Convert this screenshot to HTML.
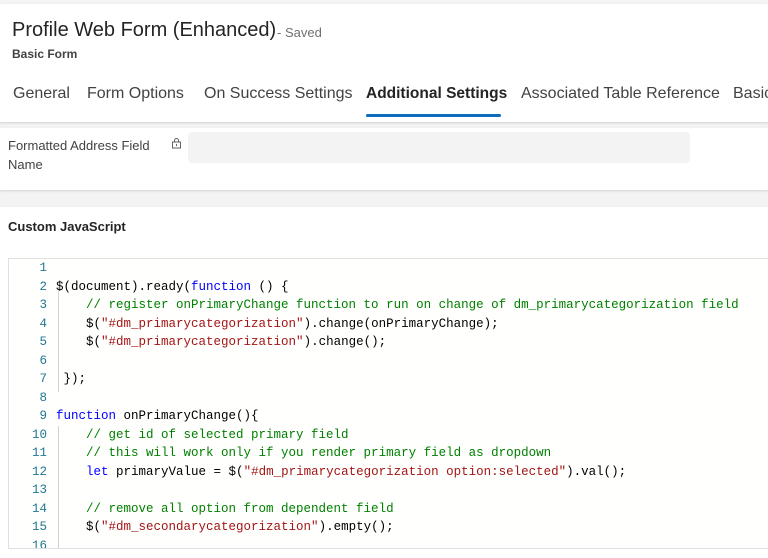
<!DOCTYPE html>
<html><head><style>
body{margin:0;width:768px;height:558px;background:#f3f3f3;font-family:"Liberation Sans",sans-serif;position:relative;overflow:hidden;color:#242424}
.a{position:absolute;white-space:nowrap}
.card{position:absolute;background:#fff;left:0;width:768px;box-shadow:0 1px 2px rgba(0,0,0,.14)}
.tab{position:absolute;top:85px;font-size:16px;color:#424242}
.code{position:absolute;left:8px;top:258px;width:762px;height:289px;background:#fffffe;border:1px solid #e0e0e0;font-family:"Liberation Mono",monospace;font-size:12.5px;overflow:hidden}
.ln{position:absolute;left:0;width:38px;text-align:right;color:#237893}
.cl{position:absolute;left:47px;color:#000;white-space:pre}
.c{color:#008000}.s{color:#a31515}.k{color:#0000ff}
.guide{position:absolute;left:49px;width:1px;background:#d3d3d3}
</style></head><body>
<div class="card" style="top:4px;height:118px"></div>
<div class="a" style="left:12px;top:19px;font-size:20px;color:#242424">Profile Web Form (Enhanced)</div>
<div class="a" style="left:277px;top:25px;font-size:13px;color:#707070">- Saved</div>
<div class="a" style="left:12px;top:47px;font-size:12px;font-weight:bold;color:#424242">Basic Form</div>
<div class="tab" style="left:13px">General</div>
<div class="tab" style="left:87px">Form Options</div>
<div class="tab" style="left:204px">On Success Settings</div>
<div class="tab" style="left:366px;font-weight:bold;color:#242424;font-size:15.5px">Additional Settings</div>
<div class="tab" style="left:521px">Associated Table Reference</div>
<div class="tab" style="left:733px">Basic</div>
<div class="a" style="left:366px;top:114px;width:135px;height:3px;background:#0f6cbd;border-radius:2px"></div>
<div class="card" style="top:128px;height:62px"></div>
<div class="a" style="left:8px;top:136px;font-size:13px;color:#424242;line-height:19px;white-space:normal;width:160px">Formatted Address Field<br>Name</div>
<svg class="a" style="left:171px;top:137px" width="11" height="12" viewBox="0 0 11 12"><rect x="1.5" y="5" width="8" height="6" fill="none" stroke="#616161"/><path d="M3.5 5V3.5a2 2 0 0 1 4 0V5" fill="none" stroke="#616161"/><rect x="5" y="7" width="1" height="2" fill="#616161"/></svg>
<div class="a" style="left:188px;top:132px;width:502px;height:31px;background:#f3f3f3;border-radius:4px"></div>
<div class="card" style="top:207px;height:351px"></div>
<div class="a" style="left:8px;top:219px;font-size:13px;font-weight:bold;color:#242424">Custom JavaScript</div>
<div class="code">
<div class="guide" style="top:28px;height:105px"></div>
<div class="guide" style="top:167px;height:130px"></div>
<div class="ln" style="top:2px">1</div>
<div class="ln" style="top:20.5px">2</div><div class="cl" style="top:20.5px">$(document).ready(<span class="k">function</span> () {</div>
<div class="ln" style="top:39px">3</div><div class="cl" style="top:39px">    <span class="c">// register onPrimaryChange function to run on change of dm_primarycategorization field</span></div>
<div class="ln" style="top:57.5px">4</div><div class="cl" style="top:57.5px">    $(<span class="s">"#dm_primarycategorization"</span>).change(onPrimaryChange);</div>
<div class="ln" style="top:76px">5</div><div class="cl" style="top:76px">    $(<span class="s">"#dm_primarycategorization"</span>).change();</div>
<div class="ln" style="top:94.5px">6</div>
<div class="ln" style="top:113px">7</div><div class="cl" style="top:113px"> });</div>
<div class="ln" style="top:131.5px">8</div>
<div class="ln" style="top:150px">9</div><div class="cl" style="top:150px"><span class="k">function</span> onPrimaryChange(){</div>
<div class="ln" style="top:168.5px">10</div><div class="cl" style="top:168.5px">    <span class="c">// get id of selected primary field</span></div>
<div class="ln" style="top:187px">11</div><div class="cl" style="top:187px">    <span class="c">// this will work only if you render primary field as dropdown</span></div>
<div class="ln" style="top:205.5px">12</div><div class="cl" style="top:205.5px">    <span class="k">let</span> primaryValue = $(<span class="s">"#dm_primarycategorization option:selected"</span>).val();</div>
<div class="ln" style="top:224px">13</div>
<div class="ln" style="top:242.5px">14</div><div class="cl" style="top:242.5px">    <span class="c">// remove all option from dependent field</span></div>
<div class="ln" style="top:261px">15</div><div class="cl" style="top:261px">    $(<span class="s">"#dm_secondarycategorization"</span>).empty();</div>
<div class="ln" style="top:279.5px">16</div>
</div>
</body></html>
